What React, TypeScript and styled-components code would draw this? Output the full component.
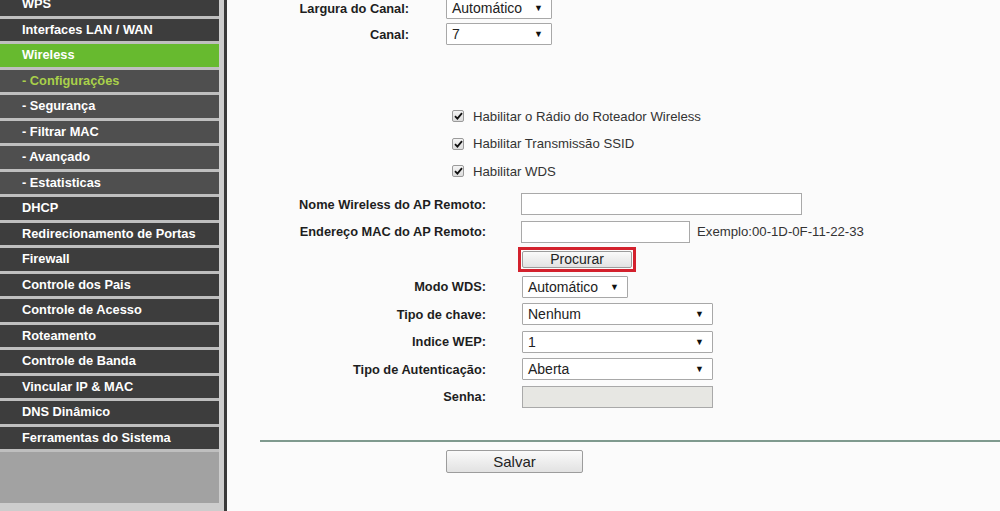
import styled, { createGlobalStyle } from "styled-components";

const GlobalStyle = createGlobalStyle`
  html, body {
    margin: 0;
    padding: 0;
    background: #fbfbfb;
    font-family: "Liberation Sans", Arial, sans-serif;
    overflow: hidden;
  }
`;

const Page = styled.div`
  display: flex;
  width: 1000px;
  height: 518px;
  margin-top: -7px;
  overflow: hidden;
`;

const SideFrame = styled.aside`
  display: flex;
  flex-shrink: 0;
  width: 224px;
  background: #cdcdcd;
  border-right: 3px solid #3a3a3a;
  padding-bottom: 8px;
`;

const Menu = styled.nav`
  width: 219px;
  background: #a2a2a2;
  display: flex;
  flex-direction: column;
`;

type MenuItemProps = {
  $variant: "main" | "sub" | "active" | "current";
};

const MenuItem = styled.div<MenuItemProps>`
  height: 22.5px;
  line-height: 22.5px;
  border-bottom: 3px solid #bfbfbf;
  padding-left: 22px;
  font-size: 12.8px;
  font-weight: bold;
  white-space: nowrap;
  color: ${({ $variant }) => ($variant === "current" ? "#a9d04a" : "#fff")};
  background: ${({ $variant }) =>
    $variant === "active" ? "#67ba2f" : $variant === "main" ? "#3d3d3d" : "#4f4f4f"};
`;

const Content = styled.main`
  flex: 1;
  display: flex;
  flex-direction: column;
  background: #fbfbfb;
`;

const TopForm = styled.div`
  display: flex;
  flex-direction: column;
  gap: 4px;
  margin-top: 4px;
`;

type RowProps = {
  $labelWidth: number;
  $gap: number;
};

const Row = styled.div<RowProps>`
  display: flex;
  align-items: center;
  min-height: 22px;

  & > label {
    width: ${({ $labelWidth }) => $labelWidth}px;
    margin-right: ${({ $gap }) => $gap}px;
  }
`;

const FormRow = styled(Row)`
  height: 27.5px;
`;

const Label = styled.label`
  flex-shrink: 0;
  text-align: right;
  font-size: 12.8px;
  font-weight: bold;
  color: #1e1e1e;
  white-space: nowrap;
`;

const SelectBox = styled.div<{ $width: number }>`
  box-sizing: border-box;
  width: ${({ $width }) => $width}px;
  height: 22px;
  display: flex;
  align-items: center;
  justify-content: space-between;
  padding: 0 8px 0 5px;
  border: 1px solid #a8a8a8;
  border-radius: 1px;
  background: #fff;
  font-size: 14px;
  color: #222;
`;

const Arrow = styled.span`
  font-size: 9px;
  color: #111;
`;

const Checks = styled.div`
  display: flex;
  flex-direction: column;
  margin-top: 57.5px;
  margin-left: 225px;
`;

const CheckRow = styled.div`
  height: 27.5px;
  display: flex;
  align-items: center;
  gap: 9px;
  font-size: 13.2px;
  color: #333;
`;

const CheckBox = styled.span`
  box-sizing: border-box;
  width: 12px;
  height: 12px;
  border: 1px solid #9a9a9a;
  border-radius: 2px;
  background: linear-gradient(#f4f4f4, #dcdcdc);
  display: flex;
  align-items: center;
  justify-content: center;
`;

const LowerForm = styled.div`
  display: flex;
  flex-direction: column;
  margin-top: 5.5px;
`;

const TextInput = styled.div<{ $width: number; $disabled?: boolean }>`
  box-sizing: border-box;
  width: ${({ $width }) => $width}px;
  height: 22px;
  border: 1px solid #a9a9a9;
  background: ${({ $disabled }) => ($disabled ? "#e7e7e3" : "#fff")};
`;

const Hint = styled.span`
  margin-left: 7px;
  font-size: 13.2px;
  color: #333;
`;

const Highlight = styled.div`
  margin-left: -3px;
  border: 3px solid #d3212d;
  padding: 1px;
  display: flex;
`;

const Button = styled.button<{ $width: number; $height: number; $size: number }>`
  box-sizing: border-box;
  width: ${({ $width }) => $width}px;
  height: ${({ $height }) => $height}px;
  padding: 0;
  border: 1px solid #9c9c9c;
  border-radius: 2px;
  background: linear-gradient(#fafafa, #e2e2e2);
  font-family: "Liberation Sans", Arial, sans-serif;
  font-size: ${({ $size }) => $size}px;
  line-height: 1;
  color: #222;
`;

const Rule = styled.hr`
  margin: 29px 0 0 33px;
  border: none;
  height: 2px;
  background: #7f9a8e;
`;

const SaveRow = styled.div`
  margin: 8px 0 0 219px;
`;

const Check = () => (
  <CheckBox>
    <svg width="9" height="8" viewBox="0 0 9 8">
      <path d="M1 4.2 L3.4 6.6 L8 1.2" fill="none" stroke="#111" strokeWidth="1.8" />
    </svg>
  </CheckBox>
);

const menu: [string, MenuItemProps["$variant"]][] = [
  ["WPS", "main"],
  ["Interfaces LAN / WAN", "main"],
  ["Wireless", "active"],
  ["- Configurações", "current"],
  ["- Segurança", "sub"],
  ["- Filtrar MAC", "sub"],
  ["- Avançado", "sub"],
  ["- Estatisticas", "sub"],
  ["DHCP", "main"],
  ["Redirecionamento de Portas", "main"],
  ["Firewall", "main"],
  ["Controle dos Pais", "main"],
  ["Controle de Acesso", "main"],
  ["Roteamento", "main"],
  ["Controle de Banda", "main"],
  ["Vincular IP & MAC", "main"],
  ["DNS Dinâmico", "main"],
  ["Ferramentas do Sistema", "main"],
];

const Select = ({ value, width }: { value: string; width: number }) => (
  <SelectBox $width={width}>
    <span>{value}</span>
    <Arrow>▼</Arrow>
  </SelectBox>
);

export default function App() {
  return (
    <>
      <GlobalStyle />
      <Page>
        <SideFrame>
          <Menu>
            {menu.map(([text, variant]) => (
              <MenuItem key={text} $variant={variant}>
                {text}
              </MenuItem>
            ))}
          </Menu>
        </SideFrame>
        <Content>
          <TopForm>
            <Row $labelWidth={182} $gap={37}>
              <Label>Largura do Canal:</Label>
              <Select value="Automático" width={106} />
            </Row>
            <Row $labelWidth={182} $gap={37}>
              <Label>Canal:</Label>
              <Select value="7" width={106} />
            </Row>
          </TopForm>

          <Checks>
            <CheckRow>
              <Check />
              Habilitar o Rádio do Roteador Wireless
            </CheckRow>
            <CheckRow>
              <Check />
              Habilitar Transmissão SSID
            </CheckRow>
            <CheckRow>
              <Check />
              Habilitar WDS
            </CheckRow>
          </Checks>

          <LowerForm>
            <FormRow $labelWidth={259} $gap={35}>
              <Label>Nome Wireless do AP Remoto:</Label>
              <TextInput $width={281} />
            </FormRow>
            <FormRow $labelWidth={259} $gap={35}>
              <Label>Endereço MAC do AP Remoto:</Label>
              <TextInput $width={169} />
              <Hint>Exemplo:00-1D-0F-11-22-33</Hint>
            </FormRow>
            <FormRow $labelWidth={259} $gap={35}>
              <Label />
              <Highlight>
                <Button $width={110} $height={17} $size={14}>
                  Procurar
                </Button>
              </Highlight>
            </FormRow>
            <FormRow $labelWidth={259} $gap={36}>
              <Label>Modo WDS:</Label>
              <Select value="Automático" width={106} />
            </FormRow>
            <FormRow $labelWidth={259} $gap={36}>
              <Label>Tipo de chave:</Label>
              <Select value="Nenhum" width={191} />
            </FormRow>
            <FormRow $labelWidth={259} $gap={36}>
              <Label>Indice WEP:</Label>
              <Select value="1" width={191} />
            </FormRow>
            <FormRow $labelWidth={259} $gap={36}>
              <Label>Tipo de Autenticação:</Label>
              <Select value="Aberta" width={191} />
            </FormRow>
            <FormRow $labelWidth={259} $gap={36}>
              <Label>Senha:</Label>
              <TextInput $width={191} $disabled />
            </FormRow>
          </LowerForm>

          <Rule />
          <SaveRow>
            <Button $width={137} $height={23} $size={15}>
              Salvar
            </Button>
          </SaveRow>
        </Content>
      </Page>
    </>
  );
}
